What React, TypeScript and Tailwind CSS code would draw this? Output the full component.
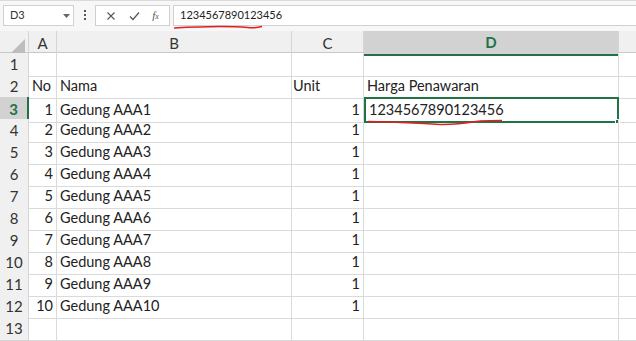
const rows = [
  { no: "", nama: "", unit: "", harga: "" },
  { no: "No", nama: "Nama", unit: "Unit", harga: "Harga Penawaran" },
  ...Array.from({ length: 10 }, (_, i) => ({
    no: String(i + 1),
    nama: `Gedung AAA${i + 1}`,
    unit: "1",
    harga: i === 0 ? "1234567890123456" : "",
  })),
  { no: "", nama: "", unit: "", harga: "" },
];

const cols = "grid-cols-[29px_28px_235px_72px_255px_1fr]";

export default function App() {
  return (
    <div className="relative h-[341px] w-[636px] overflow-hidden bg-white font-['Lato','Noto_Sans',sans-serif] text-[#222]">
      {/* formula bar */}
      <div className="flex h-[31px] items-start gap-0 border-t border-[#dadada] bg-[#f7f7f7] pt-[4px]">
        <div className="ml-[3px] flex h-[21px] w-[71px] items-center justify-between border border-[#d0d0d0] bg-white pl-[6px] pr-[3px] text-[11px] text-[#333]">
          <span>D3</span>
          <svg width="7" height="4" viewBox="0 0 7 4"><path d="M0 0h7L3.5 4z" fill="#666" /></svg>
        </div>
        <div className="flex w-[21px] justify-center pt-[5px]">
          <div className="flex flex-col gap-[2px]">
            <span className="h-[2px] w-[2px] bg-[#555]" />
            <span className="h-[2px] w-[2px] bg-[#555]" />
            <span className="h-[2px] w-[2px] bg-[#555]" />
          </div>
        </div>
        <div className="flex h-[21px] w-[75px] items-center justify-around border border-[#d0d0d0] bg-white px-[4px]">
          <svg width="10" height="10" viewBox="0 0 10 10"><path d="M1.5 1.5l7 7M8.5 1.5l-7 7" stroke="#555" strokeWidth="1.1" /></svg>
          <svg width="11" height="10" viewBox="0 0 11 10"><path d="M1 5.5l3 3 6-7" stroke="#555" strokeWidth="1.2" fill="none" /></svg>
          <span className="font-['Liberation_Serif',serif] text-[11px] italic text-[#555]">f<span className="text-[8px]">x</span></span>
        </div>
        <div className="ml-[3px] flex h-[21px] flex-1 items-center border border-r-0 border-[#d0d0d0] bg-white pl-[6px] text-[11px] text-[#222]">
          1234567890123456
        </div>
      </div>

      {/* column headers */}
      <div className={`grid ${cols} h-[22px] border-b border-[#c8c8c8] bg-[#f0f0f0] text-[15px] text-[#333]`}>
        <div className="relative border-r border-[#d5d5d5]">
          <svg className="absolute bottom-[3px] right-[3px]" width="14" height="14" viewBox="0 0 14 14"><path d="M14 0v14H0z" fill="#bdbdbd" /></svg>
        </div>
        <div className="flex items-center justify-center border-r border-[#d5d5d5]">A</div>
        <div className="flex items-center justify-center border-r border-[#d5d5d5]">B</div>
        <div className="flex items-center justify-center border-r border-[#d5d5d5]">C</div>
        <div className="flex items-center justify-center border-r border-[#d5d5d5] border-b-2 border-b-[#217346] bg-[#d2d2d2] font-bold text-[#217346]">D</div>
        <div />
      </div>

      {/* rows */}
      {rows.map((r, i) => {
        const n = i + 1;
        const active = n === 3;
        return (
          <div key={n} className={`grid ${cols} h-[22px] text-[14.5px]`}>
            <div
              className={`flex items-center justify-center border-b border-r text-[15px] ${
                active
                  ? "border-b-[#c8c8c8] border-r-2 border-r-[#217346] bg-[#d2d2d2] font-bold text-[#217346]"
                  : "border-[#d5d5d5] bg-[#f0f0f0] text-[#333]"
              }`}
            >
              {n}
            </div>
            <div className={`flex items-center border-b border-r border-[#dadada] pr-[3px] ${r.no === "No" ? "justify-start pl-[3px]" : "justify-end"}`}>
              {r.no}
            </div>
            <div className="flex items-center border-b border-r border-[#dadada] pl-[3px]">{r.nama}</div>
            <div className={`flex items-center border-b border-r border-[#dadada] pr-[3px] ${r.unit === "Unit" ? "justify-start pl-[1px]" : "justify-end"}`}>
              {r.unit}
            </div>
            <div
              className={`relative flex items-center pl-[3px] ${
                active ? "border-2 border-[#217346]" : "border-b border-r border-[#dadada]"
              }`}
            >
              {r.harga}
              {active && <span className="absolute -bottom-[3px] -right-[3px] h-[5px] w-[5px] border border-white bg-[#217346]" />}
            </div>
            <div className="border-b border-[#dadada]" />
          </div>
        );
      })}

      {/* red underline marks */}
      <svg className="pointer-events-none absolute left-0 top-0" width="636" height="341">
        <path d="M174 28 C200 26.5 225 25.5 248 27.5 C252 28.5 256 27.5 262 26.5" stroke="#e02020" strokeWidth="1.5" fill="none" />
        <path d="M368 121.5 C395 122 420 123 440 124.5 C455 125 470 122.5 480 121 C488 120.5 495 120.5 502 120.5" stroke="#e02020" strokeWidth="1.5" fill="none" />
      </svg>
    </div>
  );
}
